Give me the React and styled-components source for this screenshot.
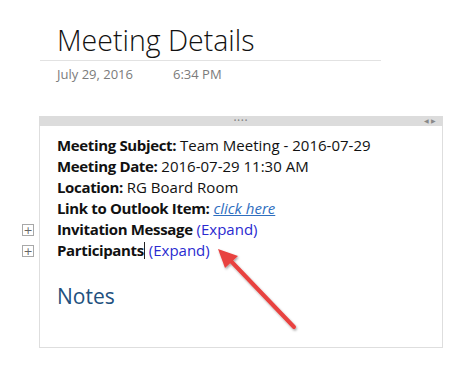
import React from 'react';
import styled, { createGlobalStyle } from 'styled-components';

const GlobalStyle = createGlobalStyle`
  body {
    margin: 0;
    background: #ffffff;
    font-family: 'Open Sans', 'Liberation Sans', sans-serif;
  }
`;

const Page = styled.div`
  position: relative;
  width: 474px;
  height: 379px;
  overflow: hidden;
  padding-top: 20px;
  box-sizing: border-box;
`;

const Header = styled.div`
  margin-left: 40px;
  width: 341px;
`;

const Title = styled.h1`
  margin: 0;
  padding-left: 17px;
  font-size: 28.5px;
  font-weight: 300;
  line-height: 40px;
  color: #111;
  border-bottom: 1px solid #e2e2e2;
`;

const DateRow = styled.div`
  display: flex;
  padding-left: 17px;
  margin-top: 4px;
  font-size: 13px;
  color: #7b7b7b;
  line-height: 18px;
`;

const DateText = styled.span`
  width: 116px;
`;

const Outline = styled.div`
  position: relative;
  margin-left: 39px;
  margin-top: 33px;
  width: 404px;
`;

const Handle = styled.div`
  height: 10px;
  background: #dcdcdc;
  display: flex;
  align-items: center;
  justify-content: center;
  position: relative;
`;

const Dots = styled.span`
  font-size: 7px;
  letter-spacing: 1px;
  color: #888;
  line-height: 10px;
`;

const Arrows = styled.span`
  position: absolute;
  right: 5px;
  top: 0;
  font-size: 6px;
  color: #888;
  line-height: 10px;
  letter-spacing: 2px;
`;

const Body = styled.div`
  border: 1px solid #dedede;
  border-top: none;
  padding: 9px 0 37px 17px;
`;

const Row = styled.div`
  position: relative;
  font-size: 15px;
  line-height: 21px;
  color: #111;
  white-space: nowrap;
`;

const Label = styled.b`
  font-weight: 700;
  letter-spacing: -0.35px;
`;

const Link = styled.a`
  color: #2f6fbf;
  font-style: italic;
  text-decoration: underline;
`;

const Expand = styled.span`
  color: #2a2ad0;
`;

const Caret = styled.span`
  display: inline-block;
  width: 1px;
  height: 17px;
  background: #222;
  vertical-align: -3px;
`;

const PlusBox = styled.span`
  position: absolute;
  left: -35px;
  top: 5px;
  width: 12px;
  height: 12px;
  border: 1px solid #a8a8a8;
  box-sizing: border-box;
  display: flex;
  align-items: center;
  justify-content: center;
  color: #666;
  font-size: 11px;
  line-height: 1;
  font-family: 'DejaVu Sans', sans-serif;
`;

const Notes = styled.div`
  margin-top: 21px;
  font-size: 21px;
  line-height: 28px;
  color: #22507e;
`;

const Pointer = styled.svg`
  position: absolute;
  left: 0;
  top: 0;
  pointer-events: none;
`;

export default function App() {
  return (
    <Page>
      <GlobalStyle />
      <Header>
        <Title>Meeting Details</Title>
        <DateRow>
          <DateText>July 29, 2016</DateText>
          <span>6:34 PM</span>
        </DateRow>
      </Header>
      <Outline>
        <Handle>
          <Dots>••••</Dots>
          <Arrows>◀▶</Arrows>
        </Handle>
        <Body>
          <Row><Label>Meeting Subject:</Label> Team Meeting - 2016-07-29</Row>
          <Row><Label>Meeting Date:</Label> 2016-07-29 11:30 AM</Row>
          <Row><Label>Location:</Label> RG Board Room</Row>
          <Row><Label>Link to Outlook Item:</Label> <Link>click here</Link></Row>
          <Row><PlusBox>+</PlusBox><Label>Invitation Message</Label> <Expand>(Expand)</Expand></Row>
          <Row><PlusBox>+</PlusBox><Label>Participants</Label><Caret /> <Expand>(Expand)</Expand></Row>
          <Notes>Notes</Notes>
        </Body>
      </Outline>
      <Pointer width="474" height="379" viewBox="0 0 474 379">
        <defs>
          <filter id="sh" x="-20%" y="-20%" width="140%" height="140%">
            <feDropShadow dx="1" dy="1.5" stdDeviation="1.2" floodColor="#000" floodOpacity="0.35" />
          </filter>
        </defs>
        <g filter="url(#sh)">
          <line x1="294" y1="327" x2="228" y2="258" stroke="#e8423f" strokeWidth="4" strokeLinecap="round" />
          <polygon points="218,249 238,256 225,268" fill="#e8423f" />
        </g>
      </Pointer>
    </Page>
  );
}
